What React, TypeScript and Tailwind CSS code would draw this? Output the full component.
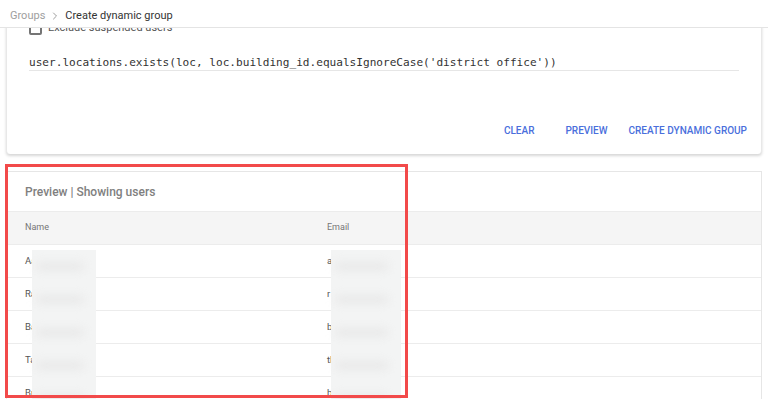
import { ChevronRight } from 'lucide-react';

const rows = [
  { name: 'Aa', email: 'a' },
  { name: 'Ra', email: 'r' },
  { name: 'Ba', email: 'b' },
  { name: 'Ta', email: 'tl' },
  { name: 'Br', email: 'b' },
];

function Blur({ className }: { className: string }) {
  // redacted column: grey strip with smudged text underneath
  return (
    <div className={`absolute top-[250px] bottom-0 bg-[#f3f4f4] ${className}`}>
      {rows.map((r, i) => (
        <div key={i} className="flex h-[33px] items-center px-1">
          <div className="h-[9px] w-[85%] rounded-full bg-[#e9e9e9] blur-[4px]" />
        </div>
      ))}
    </div>
  );
}

export default function App() {
  return (
    <div
      className="relative h-[399px] w-[768px] overflow-hidden bg-white text-[#333]"
      style={{ fontFamily: 'Roboto, "Liberation Sans", sans-serif' }}
    >
      <div className="relative z-10 flex h-[28px] items-center gap-1 border-b border-[#e4e4e4] bg-white px-[10px] pt-[5px] text-[11px]">
        <span className="text-[#9e9e9e]">Groups</span>
        <ChevronRight className="h-3 w-3 text-[#9e9e9e]" strokeWidth={2} />
        <span className="text-[#333]">Create dynamic group</span>
      </div>

      <div className="-mt-[8px] mx-[6px] rounded-b-sm border-x border-[#e8e8e8] bg-white shadow-[0_2px_3px_rgba(0,0,0,0.16)]">
        <div className="flex h-[16px] items-center gap-[6px] px-[22px] text-[11px] text-[#555]">
          <span className="h-[13px] w-[13px] rounded-[2px] border-2 border-[#757575]" />
          <span>Exclude suspended users</span>
        </div>
        <div className="mx-[22px] mt-[18px] border-b border-[#e6e6e6] leading-[14px]">
          <span
            className="text-[11.1px] leading-[14px] text-[#333]"
            style={{ fontFamily: '"DejaVu Sans Mono", "Liberation Mono", monospace' }}
          >
            user.locations.exists(loc, loc.building_id.equalsIgnoreCase('district office'))
          </span>
        </div>
        <div className="flex justify-end pr-[14px] pt-[54px] pb-[17px] text-[10px] font-medium leading-[12px] text-[#4a6fdc]">
          <span className="mr-[31px]">CLEAR</span>
          <span className="mr-[21px]">PREVIEW</span>
          <span>CREATE DYNAMIC GROUP</span>
        </div>
      </div>

      <div className="relative mx-[6px] mt-[17px] h-[240px] border border-[#e6e6e6] bg-white">
        <div className="flex h-[39px] items-center px-[18px] text-[12px] font-medium text-[#808080]">
          Preview | Showing users
        </div>
        <div className="grid h-[34px] grid-cols-[302px_1fr] items-center border-y border-[#ececec] bg-[#f5f5f5] px-[18px] text-[9px] text-[#757575]">
          <span>Name</span>
          <span>Email</span>
        </div>
        {rows.map((r) => (
          <div
            key={r.name}
            className="grid h-[33px] grid-cols-[302px_1fr] items-center border-b border-[#ececec] px-[18px] text-[9.5px] text-[#555]"
          >
            <span>{r.name}</span>
            <span>{r.email}</span>
          </div>
        ))}
      </div>

      <Blur className="left-[32px] w-[64px]" />
      <Blur className="left-[331px] w-[70px]" />

      <div className="pointer-events-none absolute left-[5px] top-[164px] h-[234px] w-[403px] border-[3px] border-[#f24a4a]" />
    </div>
  );
}
